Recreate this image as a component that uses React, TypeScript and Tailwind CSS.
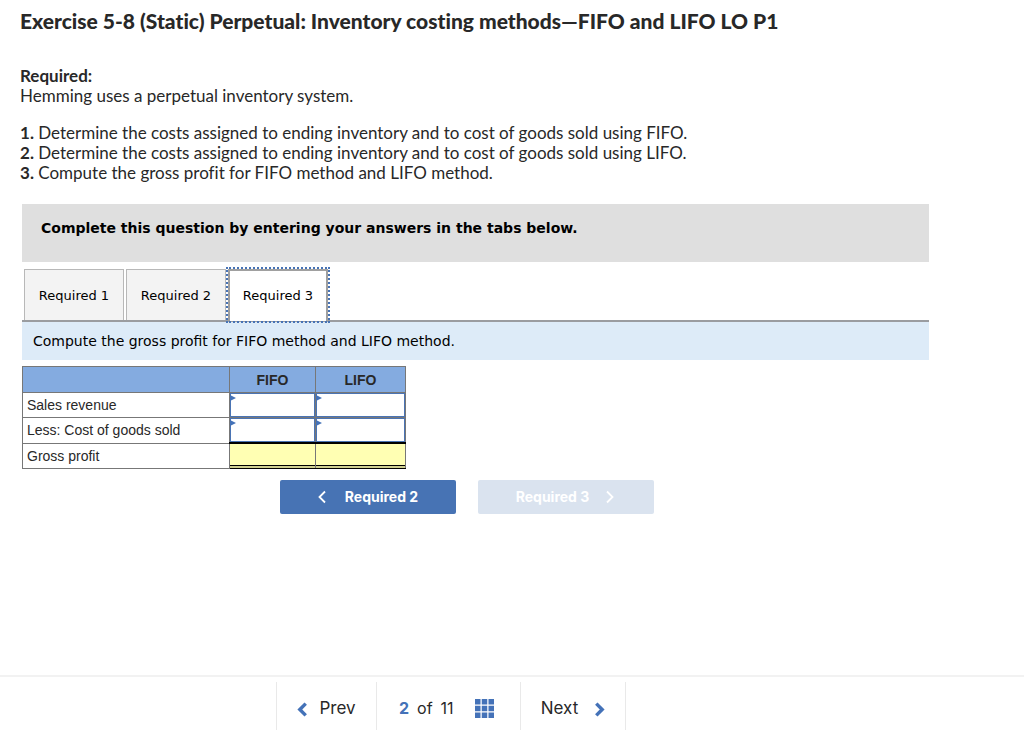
import React, { useState } from 'react';

const tabs = ['Required 1', 'Required 2', 'Required 3'];

const steps = [
  'Determine the costs assigned to ending inventory and to cost of goods sold using FIFO.',
  'Determine the costs assigned to ending inventory and to cost of goods sold using LIFO.',
  'Compute the gross profit for FIFO method and LIFO method.',
];

const rows = ['Sales revenue', 'Less: Cost of goods sold'];
const methods = ['FIFO', 'LIFO'];

function Chevron({ dir, className, width }: { dir: 'left' | 'right'; className: string; width: number }) {
  return (
    <svg viewBox="0 0 10 14" className={className} fill="none" stroke="currentColor" strokeWidth={width} aria-hidden="true">
      <path d={dir === 'left' ? 'M8 1.5 2.5 7 8 12.5' : 'M2 1.5 7.5 7 2 12.5'} />
    </svg>
  );
}

function GridIcon() {
  return (
    <svg viewBox="0 0 19 19" className="h-[19px] w-[19px]" fill="currentColor" aria-hidden="true">
      {[0, 7, 14].map((y) =>
        [0, 7, 14].map((x) => <rect key={`${x}-${y}`} x={x - (x / 14) * 0.5} y={y - (y / 14) * 0.5} width="5.5" height="5.5" />)
      )}
    </svg>
  );
}

export default function App() {
  const [active, setActive] = useState(2);
  const [values, setValues] = useState<Record<string, string>>({});

  return (
    <div className="flex min-h-screen flex-col bg-white font-['Inter',sans-serif] text-[#282828]">
      <main className="flex-1 px-5 pt-2">
        <h1 className="font-['Lato',sans-serif] text-[21px] leading-[26px] font-black [font-variant-ligatures:none]">
          Exercise 5-8 (Static) Perpetual: Inventory costing methods—FIFO and LIFO LO P1
        </h1>

        <div className="mt-8 font-['Lato',sans-serif] text-[17px] leading-5 [font-variant-ligatures:none]">
          <p className="font-bold">Required:</p>
          <p>Hemming uses a perpetual inventory system.</p>
          <div className="mt-[17px]">
            {steps.map((s, i) => (
              <p key={s}>
                <b>{i + 1}.</b> {s}
              </p>
            ))}
          </div>
        </div>

        <section className="mt-[21px] mr-[75px] ml-[2px]">
          <div className="h-[58px] bg-[#dfdfdf] px-[19px] pt-[14px] font-['DejaVu_Sans',sans-serif] text-sm leading-5 font-bold text-black">
            Complete this question by entering your answers in the tabs below.
          </div>

          <div role="tablist" className="mt-[7px] flex items-end gap-[2px] border-b-2 border-[#9a9ca0] pl-[2px] font-['DejaVu_Sans',sans-serif] text-[13px] text-black">
            {tabs.map((t, i) => (
              <button
                key={t}
                role="tab"
                type="button"
                aria-selected={active === i}
                onClick={() => setActive(i)}
                className={
                  active === i
                    ? 'z-10 -mb-px h-[52px] w-[100px] border-2 border-b-0 border-[#a0a0a0] bg-white outline-2 outline-offset-0 outline-[#4773b5] outline-dotted'
                    : 'h-[51px] w-[100px] border border-b-0 border-[#b8b8b8] bg-[#f3f3f3] pt-[2px]'
                }
              >
                {t}
              </button>
            ))}
          </div>

          <p className="bg-[#ddebf8] px-[11px] py-[9px] font-['DejaVu_Sans',sans-serif] text-sm leading-5 text-black">
            Compute the gross profit for FIFO method and LIFO method.
          </p>

          <table className="mt-[6px] border-collapse border border-[#777] font-['Liberation_Sans',sans-serif] text-sm leading-5">
            <thead>
              <tr className="h-[26px] bg-[#84abe0]">
                <td className="w-[207px] border border-[#777]" />
                <th scope="col" className="w-[86px] border border-[#777] font-bold">FIFO</th>
                <th scope="col" className="w-[90px] border border-[#777] font-bold">LIFO</th>
              </tr>
            </thead>
            <tbody>
              {rows.map((r) => (
                <tr key={r} className="h-[25px]">
                  <th scope="row" className="border border-[#777] px-1 text-left font-normal">{r}</th>
                  {methods.map((m) => (
                    <td key={m} className="relative border border-[#777] p-0">
                      <input
                        aria-label={`${r} ${m}`}
                        value={values[r + m] ?? ''}
                        onChange={(e) => setValues({ ...values, [r + m]: e.target.value })}
                        className="block h-6 w-full border border-[#4a74b4] px-1 text-right outline-none"
                      />
                      <svg viewBox="0 0 6 6" className="absolute top-[2px] left-0 h-[6px] w-[6px]" fill="#4472b8" aria-hidden="true">
                        <path d="M0 0 6 3 0 6z" />
                      </svg>
                    </td>
                  ))}
                </tr>
              ))}
              <tr className="h-[25px]">
                <th scope="row" className="border border-[#777] px-1 text-left font-normal">Gross profit</th>
                {methods.map((m) => (
                  <td key={m} className="border-x border-t-2 border-b border-x-[#777] border-t-black border-b-black bg-[#d0d091] p-0 pb-[2px]">
                    <div className="h-[22px] border-b border-black bg-[#ffffb3]" />
                  </td>
                ))}
              </tr>
            </tbody>
          </table>

          <div className="mt-[11px] flex justify-center gap-[22px] pr-[18px] text-sm font-bold text-white">
            <button type="button" onClick={() => setActive(1)} className="flex h-[34px] w-44 items-center justify-center gap-[18px] rounded-[2px] bg-[#4773b4]">
              <Chevron dir="left" width={1.8} className="h-[14px] w-[10px]" />
              Required 2
            </button>
            <button type="button" disabled className="flex h-[34px] w-44 items-center justify-center gap-4 rounded-[2px] bg-[#dae3ef]">
              Required 3
              <Chevron dir="right" width={1.8} className="h-[14px] w-[10px]" />
            </button>
          </div>
        </section>
      </main>

      <footer className="flex h-16 justify-center border-t-2 border-[#f2f2f2] pt-[5px] pr-[122px] pb-[9px]">
        <button type="button" className="flex w-[101px] items-center justify-center gap-[11px] border-x border-[#e9e9e9] pt-[6px] text-[17px]">
          <Chevron dir="left" width={3.2} className="h-[15px] w-[11px] text-[#4472b8]" />
          Prev
        </button>
        <div className="flex w-[143px] items-center pt-1 pl-[22px] text-base">
          <b className="text-[#4472b8]">2</b>
          <span className="ml-2">of</span>
          <span className="ml-2">11</span>
          <button type="button" aria-label="Question list" className="ml-[21px] text-[#4472b8]">
            <GridIcon />
          </button>
        </div>
        <button type="button" className="flex w-[106px] items-center justify-center gap-4 border-x border-[#e9e9e9] pt-[6px] text-[17px]">
          Next
          <Chevron dir="right" width={3.2} className="h-[15px] w-[11px] text-[#4472b8]" />
        </button>
      </footer>
    </div>
  );
}
